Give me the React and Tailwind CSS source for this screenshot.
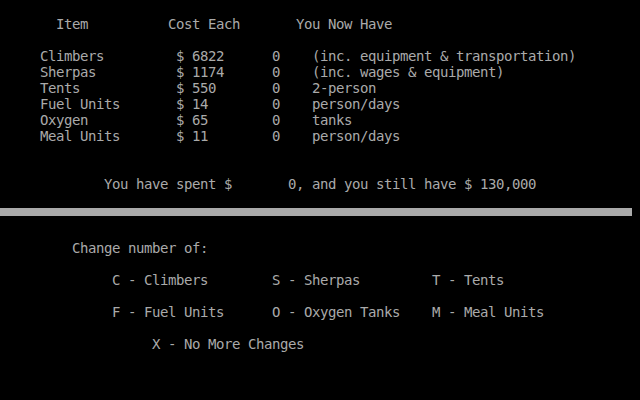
import React from "react";

function line(segs) {
  let s = "";
  for (const [col, text] of segs) {
    while (s.length < col) s += " ";
    s += text;
  }
  return s;
}

const rows = [
  [],
  [[7, "Item"], [21, "Cost Each"], [37, "You Now Have"]],
  [],
  [[5, "Climbers"], [22, "$ 6822"], [34, "0"], [39, "(inc. equipment & transportation)"]],
  [[5, "Sherpas"], [22, "$ 1174"], [34, "0"], [39, "(inc. wages & equipment)"]],
  [[5, "Tents"], [22, "$ 550"], [34, "0"], [39, "2-person"]],
  [[5, "Fuel Units"], [22, "$ 14"], [34, "0"], [39, "person/days"]],
  [[5, "Oxygen"], [22, "$ 65"], [34, "0"], [39, "tanks"]],
  [[5, "Meal Units"], [22, "$ 11"], [34, "0"], [39, "person/days"]],
  [],
  [],
  [[13, "You have spent $"], [36, "0, and you still have $ 130,000"]],
  [],
  "BAR",
  [],
  [[9, "Change number of:"]],
  [],
  [[14, "C - Climbers"], [34, "S - Sherpas"], [54, "T - Tents"]],
  [],
  [[14, "F - Fuel Units"], [34, "O - Oxygen Tanks"], [54, "M - Meal Units"]],
  [],
  [[19, "X - No More Changes"]],
  [],
  [],
  [],
];

export default function App() {
  return (
    <div
      className="w-[640px] h-[400px] bg-black text-[#aaaaaa] overflow-hidden flex flex-col text-[14px] leading-[16px] tracking-[-0.43px]"
      style={{ fontFamily: '"DejaVu Sans Mono", "Liberation Mono", monospace' }}
    >
      {rows.map((r, i) =>
        r === "BAR" ? (
          <div key={i} className="h-4 shrink-0">
            <div className="h-2 w-[632px] bg-[#aaaaaa]" />
          </div>
        ) : (
          <div key={i} className="h-4 shrink-0 whitespace-pre">
            {line(r)}
          </div>
        )
      )}
    </div>
  );
}
